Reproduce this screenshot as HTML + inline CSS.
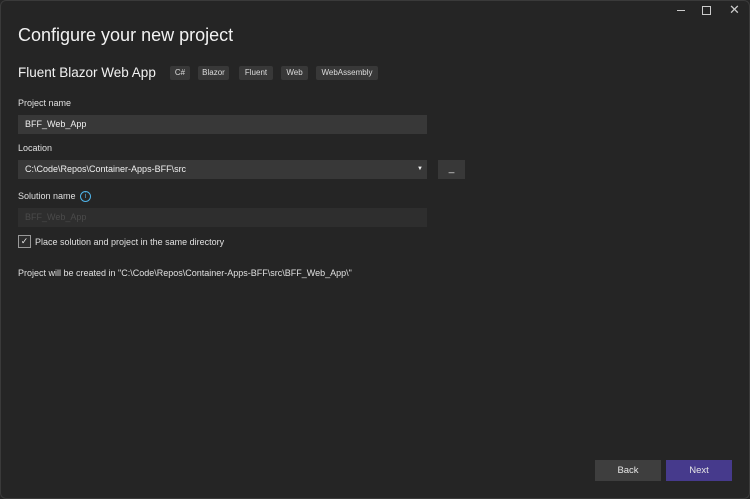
<!DOCTYPE html>
<html><head><style>
body{margin:0;width:750px;height:499px;background:#252525;font-family:"Liberation Sans",sans-serif;color:#e6e6e6;overflow:hidden;position:relative}
.win{position:absolute;left:0;top:0;width:748px;height:497px;border:1px solid #3a3a3a;border-radius:6px}
.a{position:absolute;white-space:nowrap}
.inp{position:absolute;left:18px;width:409px;height:19px;background:#383838;font-size:9px;line-height:19px;padding-left:7px;box-sizing:border-box;color:#f0f0f0}
.tag{position:absolute;top:66px;background:#383838;color:#dcdcdc;font-size:8px;height:14px;line-height:14px;border-radius:2px;text-align:center}
.lbl{font-size:9px;color:#e0e0e0}
.btn{position:absolute;top:460px;height:21px;line-height:21px;text-align:center;font-size:9.5px}
</style></head><body>
<div class="win"></div>
<div class="a" style="left:677px;top:10px;width:8px;height:1px;background:#ccc"></div>
<div class="a" style="left:702px;top:6px;width:7px;height:7px;border:1px solid #ccc"></div>
<div class="a" style="left:729px;top:2px;font-size:13px;color:#ccc">✕</div>
<div class="a" style="left:18px;top:25px;font-size:18px;color:#f2f2f2">Configure your new project</div>
<div class="a" style="left:18px;top:65px;font-size:13.5px;color:#f2f2f2">Fluent Blazor Web App</div>
<div class="tag" style="left:170px;width:20px">C#</div>
<div class="tag" style="left:198px;width:31px">Blazor</div>
<div class="tag" style="left:239px;width:34px">Fluent</div>
<div class="tag" style="left:281px;width:27px">Web</div>
<div class="tag" style="left:316px;width:62px">WebAssembly</div>
<div class="a lbl" style="left:18px;top:98px">Project name</div>
<div class="inp" style="top:115px">BFF_Web_App</div>
<div class="a lbl" style="left:18px;top:143px">Location</div>
<div class="inp" style="top:160px">C:\Code\Repos\Container-Apps-BFF\src<span style="position:absolute;right:4px;top:0;font-size:6px">▼</span></div>
<div class="a" style="left:438px;top:160px;width:27px;height:19px;background:#383838;text-align:center;font-size:10px;line-height:17px">_</div>
<div class="a lbl" style="left:18px;top:191px">Solution name <span style="display:inline-block;width:9px;height:9px;border:1px solid #4fb3e8;border-radius:50%;color:#4fb3e8;font-size:7px;line-height:9px;text-align:center;vertical-align:middle;margin-left:2px">i</span></div>
<div class="inp" style="top:208px;background:#2e2e2e;color:#4a4a4a">BFF_Web_App</div>
<div class="a" style="left:18px;top:235px;width:11px;height:11px;border:1px solid #999;background:#2d2d2d;font-size:9px;line-height:11px;text-align:center">✓</div>
<div class="a lbl" style="left:35px;top:237px">Place solution and project in the same directory</div>
<div class="a lbl" style="left:18px;top:268px">Project will be created in "C:\Code\Repos\Container-Apps-BFF\src\BFF_Web_App\"</div>
<div class="btn" style="left:595px;width:66px;background:#3e3e3e">Back</div>
<div class="btn" style="left:666px;width:66px;background:#463a8c">Next</div>
</body></html>
